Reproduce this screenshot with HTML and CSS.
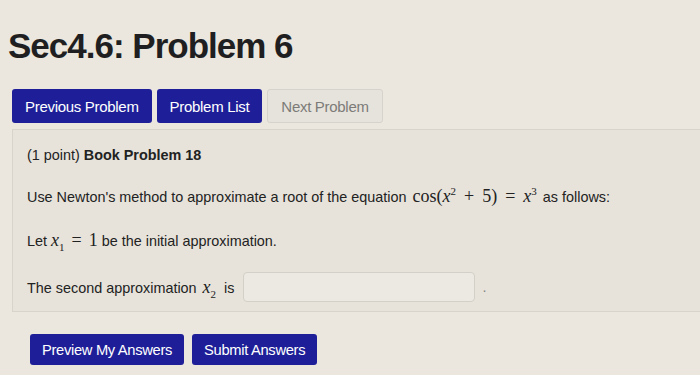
FILE: index.html
```html
<!DOCTYPE html>
<html>
<head>
<meta charset="utf-8">
<link rel="stylesheet" href="styles.css">
</head>
<body>
<div class="page">
  <h1 class="title">Sec4.6: Problem 6</h1>
  <div class="nav">
    <span class="btn">Previous Problem</span>
    <span class="btn">Problem List</span>
    <span class="btn btn-disabled">Next Problem</span>
  </div>
  <div class="panel">
    <p class="line">(1 point) <b>Book Problem 18</b></p>
    <p class="line l2">Use Newton's method to approximate a root of the equation <span class="math eq">cos(<i>x</i><sup>2</sup><span class="op">+</span>5)<span class="op">=</span><i>x</i><sup>3</sup></span> as follows:</p>
    <p class="line l3">Let <span class="math"><i>x</i><sub>1</sub><span class="op">=</span>1</span> be the initial approximation.</p>
    <div class="answer-row">
      <span>The second approximation <span class="math sym"><i>x</i><sub>2</sub></span> is</span>
      <span class="answer-box"></span>
      <span class="dot">.</span>
    </div>
  </div>
  <div class="actions">
    <span class="btn btn-sm">Preview My Answers</span>
    <span class="btn btn-sm">Submit Answers</span>
  </div>
</div>
</body>
</html>
```

FILE: styles.css
```css
html, body {
  margin: 0;
  padding: 0;
  background: #ebe7df;
}
body {
  font-family: "Liberation Sans", Arial, sans-serif;
  color: #222;
  font-size: 14.4px;
}
.page {
  padding: 26px 0 0 10px;
}
.title {
  margin: 0 0 0 -2px;
  font-size: 35px;
  line-height: 40px;
  letter-spacing: -1px;
  font-weight: bold;
  color: #1f1f22;
}
.nav {
  display: flex;
  gap: 5px;
  margin-top: 23px;
  padding-left: 2px;
}
.btn {
  display: inline-flex;
  align-items: center;
  justify-content: center;
  height: 34px;
  padding: 0 13px;
  background: #1e1f98;
  color: #fff;
  border-radius: 3px;
  font-size: 15px;
  letter-spacing: -0.3px;
  box-sizing: border-box;
}
.btn-disabled {
  background: #e6e3dc;
  color: #7c7b78;
  border: 1px solid #d6d3cc;
}
.panel {
  margin: 6px 0 0 2px;
  background: #e7e3da;
  border: 1px solid #d8d4cb;
  border-right: none;
  padding: 15px 14px 9px;
  display: flex;
  flex-direction: column;
}
.line {
  margin: 0;
  height: 20px;
  line-height: 20px;
}
.l2 {
  margin-top: 21px;
}
.l3 {
  margin-top: 24px;
}
.math {
  font-family: "Liberation Serif", "Times New Roman", serif;
  font-size: 18px;
  letter-spacing: 0;
}
.math sup, .math sub {
  font-size: 11px;
  line-height: 0;
}
.op {
  margin: 0 7px;
}
.eq .op {
  margin: 0 8px;
}
.eq {
  margin: 0 2px;
}
.sym {
  margin: 0 4px 0 2px;
}
.answer-row {
  display: flex;
  align-items: center;
  height: 30px;
  margin-top: 22px;
}
.answer-box {
  width: 232px;
  height: 30px;
  box-sizing: border-box;
  border: 1px solid #d3d0c8;
  border-radius: 4px;
  background: #ece9e2;
  margin-left: 8px;
}
.dot {
  margin-left: 8px;
  color: #888;
}
.actions {
  display: flex;
  gap: 8px;
  margin-top: 22px;
  padding-left: 20px;
}
.btn-sm {
  height: 31px;
  padding: 0 12px;
  font-size: 14.7px;
}
```
